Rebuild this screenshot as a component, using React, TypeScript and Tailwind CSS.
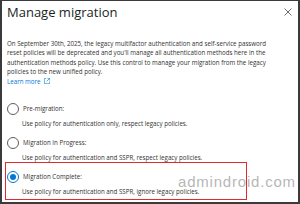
const font = { fontFamily: '"Open Sans", "Liberation Sans", sans-serif' };

function Radio({ checked }: { checked?: boolean }) {
  return checked ? (
    <span className="shrink-0 w-[12px] h-[12px] rounded-full border border-[#0078d4] flex items-center justify-center">
      <span className="w-[6px] h-[6px] rounded-full bg-[#0078d4]" />
    </span>
  ) : (
    <span className="shrink-0 w-[12px] h-[12px] rounded-full border border-[#605e5c] bg-white" />
  );
}

function Option({ label, desc, checked }: { label: string; desc: string; checked?: boolean }) {
  return (
    <div>
      <div className="h-[12px] flex items-center gap-[4px]">
        <Radio checked={checked} />
        <span className="text-[6.2px] leading-[12px] text-[#323130]">{label}</span>
      </div>
      <p className="mt-[4px] ml-[15px] text-[6.2px] leading-[10px] text-[#323130]">{desc}</p>
    </div>
  );
}

export default function App() {
  return (
    <div
      className="relative w-[300px] h-[204px] bg-white border-t border-l-2 border-r-2 border-b-2 border-[#3a3a3a] overflow-hidden"
      style={font}
    >
      <div className="pl-[5px] pr-[5px]">
        <div className="h-[22px] flex items-center justify-between">
          <h1 className="text-[13px] font-medium text-[#201f1e] leading-[22px]">Manage migration</h1>
          <svg className="w-[8px] h-[8px] mr-[1px]" viewBox="0 0 8 8" fill="none" stroke="#605e5c" strokeWidth={0.9}>
            <path d="M0.5 0.5l7 7M7.5 0.5l-7 7" />
          </svg>
        </div>

        <p className="mt-[16px] text-[6.2px] leading-[9.4px] text-[#323130]">
          On September 30th, 2025, the legacy multifactor authentication and self-service password
          <br />
          reset policies will be deprecated and you'll manage all authentication methods here in the
          <br />
          authentication methods policy. Use this control to manage your migration from the legacy
          <br />
          policies to the new unified policy.
          <br />
          <span className="inline-flex items-center gap-[3px] text-[#0078d4]">
            Learn more
            <svg className="w-[6px] h-[6px]" viewBox="0 0 8 8" fill="none" stroke="#0078d4" strokeWidth={0.8}>
              <path d="M3 0.5H0.5v7h7V5M4.5 0.5h3v3M7.5 0.5L3.5 4.5" />
            </svg>
          </span>
        </p>

        <div className="mt-[17px]">
          <Option label="Pre-migration:" desc="Use policy for authentication only, respect legacy policies." />
          <div className="mt-[8px]">
            <Option
              label="Migration In Progress:"
              desc="Use policy for authentication and SSPR, respect legacy policies."
            />
          </div>
          <div className="-mt-[1px] -ml-[2px] w-[242px] border border-[#e5282f] pt-[8px] pb-[2px] pl-[1px]">
            <Option
              checked
              label="Migration Complete:"
              desc="Use policy for authentication and SSPR, ignore legacy policies."
            />
          </div>
        </div>
      </div>

      <span
        className="absolute left-[176px] top-[171px] text-[15px] tracking-[0.8px] text-[#a3a3a3]/80 leading-[20px]"
        style={{ fontFamily: '"Liberation Sans", sans-serif' }}
      >
        admindroid.com
      </span>
    </div>
  );
}
